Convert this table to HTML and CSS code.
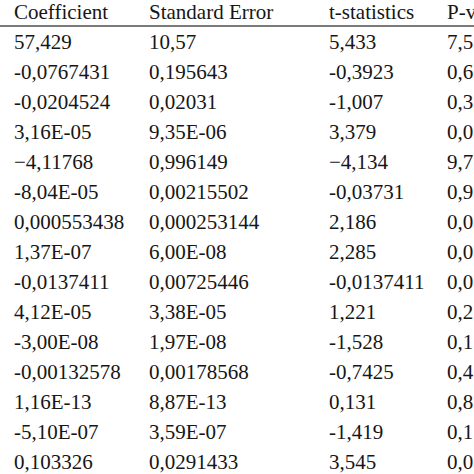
FILE: index.html
```html
<!DOCTYPE html>
<html>
<head>
<meta charset="utf-8">
<link rel="stylesheet" href="styles.css">
</head>
<body>
<div class="table">
  <div class="row head">
    <div>Coefficient</div><div>Standard Error</div><div>t-statistics</div><div>P-value</div>
  </div>
  <div class="row"><div>57,429</div><div>10,57</div><div>5,433</div><div>7,5</div></div>
  <div class="row"><div>-0,0767431</div><div>0,195643</div><div>-0,3923</div><div>0,6</div></div>
  <div class="row"><div>-0,0204524</div><div>0,02031</div><div>-1,007</div><div>0,3</div></div>
  <div class="row"><div>3,16E-05</div><div>9,35E-06</div><div>3,379</div><div>0,0</div></div>
  <div class="row"><div>−4,11768</div><div>0,996149</div><div>−4,134</div><div>9,7</div></div>
  <div class="row"><div>-8,04E-05</div><div>0,00215502</div><div>-0,03731</div><div>0,9</div></div>
  <div class="row"><div>0,000553438</div><div>0,000253144</div><div>2,186</div><div>0,0</div></div>
  <div class="row"><div>1,37E-07</div><div>6,00E-08</div><div>2,285</div><div>0,0</div></div>
  <div class="row"><div>-0,0137411</div><div>0,00725446</div><div>-0,0137411</div><div>0,0</div></div>
  <div class="row"><div>4,12E-05</div><div>3,38E-05</div><div>1,221</div><div>0,2</div></div>
  <div class="row"><div>-3,00E-08</div><div>1,97E-08</div><div>-1,528</div><div>0,1</div></div>
  <div class="row"><div>-0,00132578</div><div>0,00178568</div><div>-0,7425</div><div>0,4</div></div>
  <div class="row"><div>1,16E-13</div><div>8,87E-13</div><div>0,131</div><div>0,8</div></div>
  <div class="row"><div>-5,10E-07</div><div>3,59E-07</div><div>-1,419</div><div>0,1</div></div>
  <div class="row"><div>0,103326</div><div>0,0291433</div><div>3,545</div><div>0,0</div></div>
</div>
</body>
</html>
```
FILE: styles.css
```css
html, body {
  margin: 0;
  padding: 0;
  background: #fff;
  overflow: hidden;
}
body {
  width: 474px;
  height: 474px;
  font-family: "Liberation Serif", "DejaVu Serif", serif;
  font-size: 21px;
  color: #161616;
}
.table {
  padding-left: 14px;
  width: 600px;
}
.row {
  display: grid;
  grid-template-columns: 135px 180px 118px 120px;
  height: 30px;
  line-height: 30px;
  white-space: nowrap;
  font-family: "Liberation Serif", "DejaVu Serif", serif;
}
.row.head {
  height: 25px;
  line-height: 25px;
  border-bottom: 2px solid #7a7a7a;
  margin-left: -14px;
  padding-left: 14px;
}
```
